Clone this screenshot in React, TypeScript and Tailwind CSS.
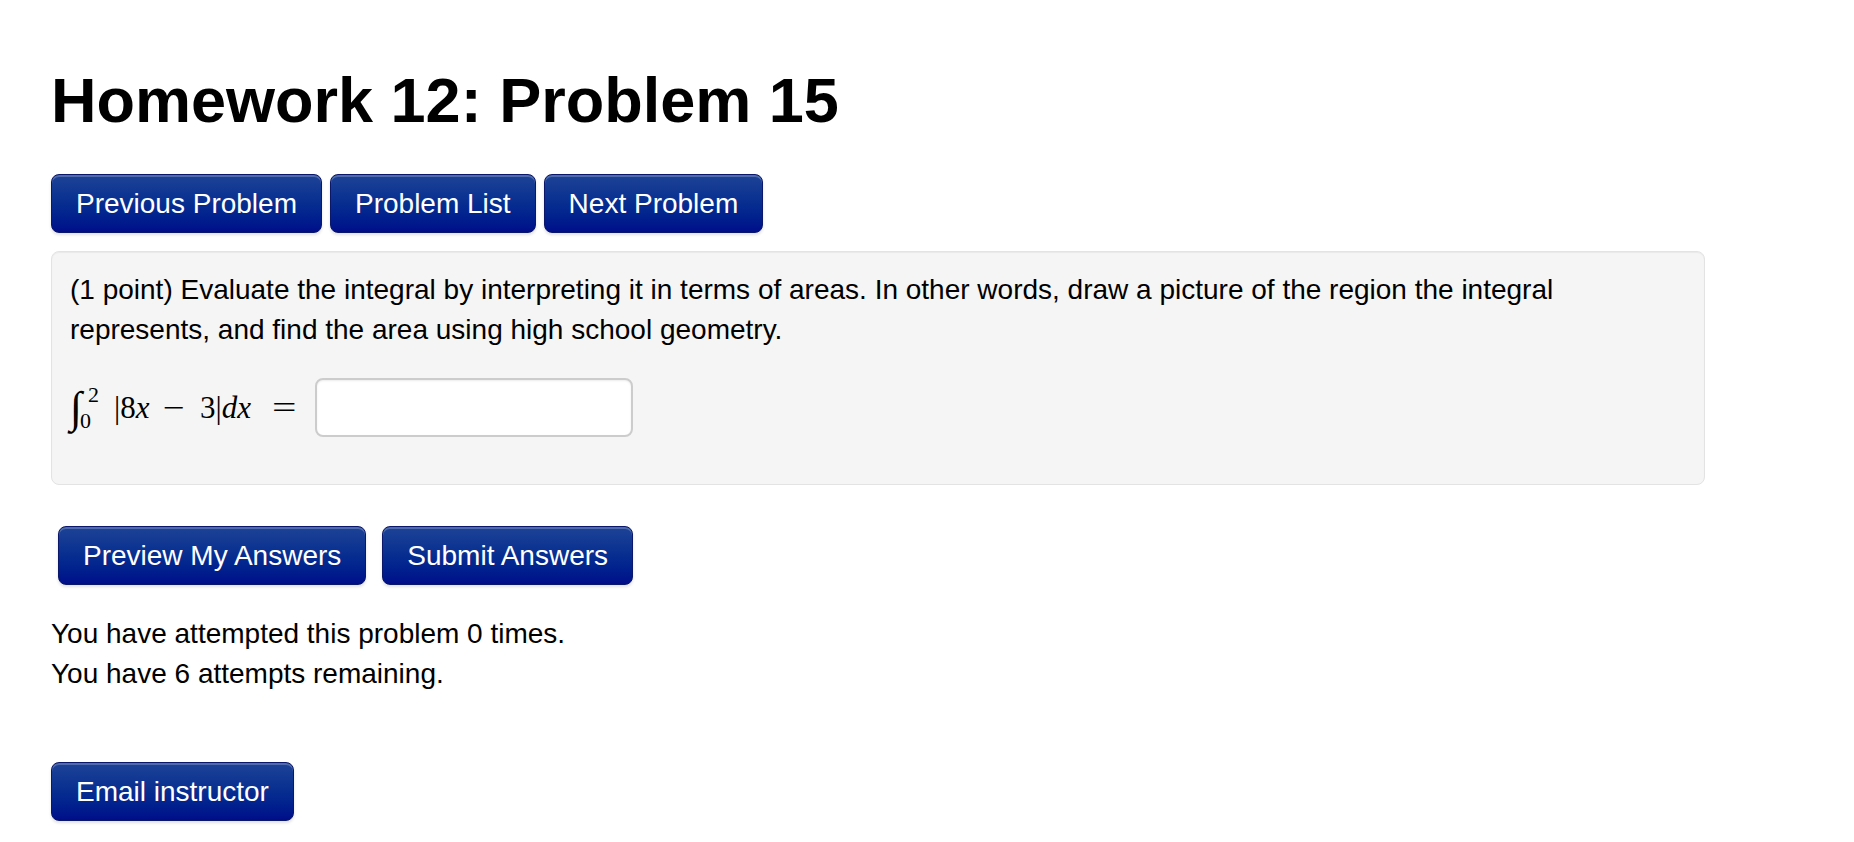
import React from 'react';

const btn =
  'inline-flex items-center h-[59px] px-[24px] rounded-[8px] border border-[#0a176b] bg-gradient-to-b from-[#1d4396] to-[#000c8a] text-white text-[28px] leading-[40px] shadow-[inset_0_2px_0_rgba(255,255,255,0.22),0_2px_3px_rgba(0,0,0,0.12)] whitespace-nowrap';

function NavButton({ label }: { label: string }) {
  return (
    <button type="button" className={btn}>
      {label}
    </button>
  );
}

// ∫₀² |8x − 3| dx =
function IntegralExpr() {
  return (
    <span className="flex items-center font-['Liberation_Serif','Times_New_Roman',serif] text-[31px] leading-none">
      <span className="text-[44px] italic leading-none">∫</span>
      <span className="-ml-[2px] flex flex-col text-[22px] leading-[20px]">
        <span className="ml-[8px]">2</span>
        <span className="mt-[6px]">0</span>
      </span>
      <span className="ml-[15px] flex items-baseline">
        <span>|8</span>
        <i>x</i>
        <span className="ml-[15px] inline-block scale-x-[1.25]">−</span>
        <span className="ml-[18px]">3|</span>
        <i>dx</i>
        <span className="ml-[21px] inline-block origin-left scale-x-[1.4]">=</span>
      </span>
    </span>
  );
}

export default function App() {
  return (
    <div className="min-h-screen bg-white pl-[51px] pt-[60px] pb-[20px] font-['Liberation_Sans',Arial,sans-serif] text-[28px] leading-[40px] text-black">
      <h2 className="text-[63px] font-bold leading-[80px]">Homework 12: Problem 15</h2>

      {/* problem navigation */}
      <div className="mt-[34px] flex gap-[8px]">
        <NavButton label="Previous Problem" />
        <NavButton label="Problem List" />
        <NavButton label="Next Problem" />
      </div>

      {/* problem body */}
      <div className="mt-[18px] w-[1654px] rounded-[8px] border border-[#e3e3e3] bg-[#f5f5f5] px-[18px] pt-[18px] pb-[47px] shadow-[inset_0_1px_1px_rgba(0,0,0,0.05)]">
        <p>
          (1 point) Evaluate the integral by interpreting it in terms of areas. In other words, draw a picture of the
          region the integral represents, and find the area using high school geometry.
        </p>

        <div className="mt-[28px] flex items-center">
          <IntegralExpr />
          <input
            type="text"
            className="ml-[25px] h-[59px] w-[318px] rounded-[8px] border-2 border-[#cccccc] bg-white shadow-[inset_0_1px_2px_rgba(0,0,0,0.08)] outline-none"
          />
        </div>
      </div>

      {/* answer submission */}
      <div className="mt-[41px] ml-[7px] flex gap-[16px]">
        <NavButton label="Preview My Answers" />
        <NavButton label="Submit Answers" />
      </div>

      <div className="mt-[29px]">
        <p>You have attempted this problem 0 times.</p>
        <p>You have 6 attempts remaining.</p>
      </div>

      <div className="mt-[68px]">
        <NavButton label="Email instructor" />
      </div>
    </div>
  );
}
